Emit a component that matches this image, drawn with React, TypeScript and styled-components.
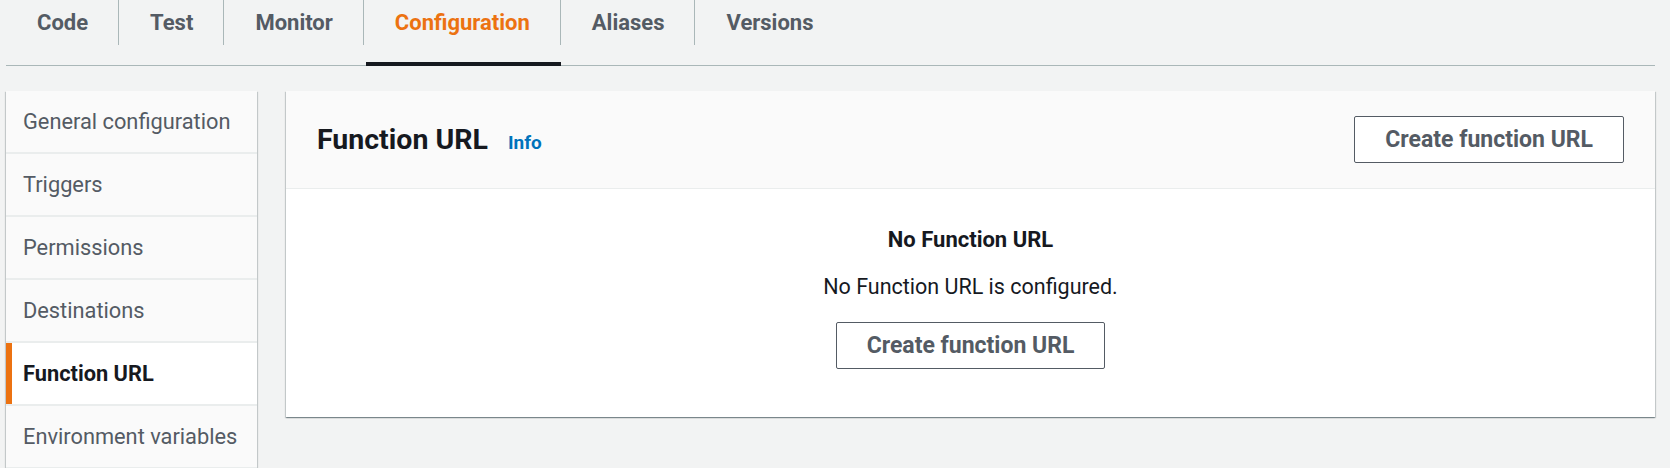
import React from "react";
import styled, { createGlobalStyle, css } from "styled-components";

const colors = {
    page: "#f2f3f3",
    panel: "#ffffff",
    tint: "#fafafa",
    divider: "#eaeded",
    tabRule: "#aab7b8",
    text: "#16191f",
    muted: "#545b64",
    orange: "#ec7211",
    link: "#0073bb",
};

const cardShadow = `0 1px 1px 0 rgba(0, 28, 36, 0.3), 1px 1px 1px 0 rgba(0, 28, 36, 0.15), -1px 1px 1px 0 rgba(0, 28, 36, 0.15)`;

const GlobalStyle = createGlobalStyle`
    html, body {
        margin: 0;
        padding: 0;
        background: ${colors.page};
        overflow: hidden;
    }
    body {
        font-family: Roboto, "Liberation Sans", Arial, sans-serif;
        color: ${colors.text};
    }
    * {
        box-sizing: border-box;
    }
`;

const Page = styled.div`
    height: 468px;
    padding: 0 15px 0 6px;
`;

const TabBar = styled.nav`
    display: flex;
    height: 66px;
    border-bottom: 1px solid ${colors.tabRule};
`;

const Tab = styled.div<{ $active?: boolean; $last?: boolean }>`
    position: relative;
    height: 66px;
    margin-bottom: -1px;
    padding: 0 31px;
    font-size: 22px;
    font-weight: 700;
    line-height: 45px;
    color: ${p => (p.$active ? colors.orange : colors.muted)};

    ${p => !p.$last && css`
        &::before {
            content: '';
            position: absolute;
            top: 0;
            right: 0;
            width: 1px;
            height: 45px;
            background: ${colors.tabRule};
        }
    `}

    ${p => p.$active && css`
        &::after {
            content: '';
            position: absolute;
            left: 2px;
            right: 0;
            bottom: 0;
            height: 4px;
            background: ${colors.text};
        }
    `}
`;

const Columns = styled.div`
    display: grid;
    grid-template-columns: 251px 1fr;
    column-gap: 29px;
    align-items: start;
    padding-top: 25px;
`;

const Sidebar = styled.ul`
    list-style: none;
    margin: 0;
    padding: 0;
    background: ${colors.tint};
    box-shadow: ${cardShadow};
`;

const SideItem = styled.li<{ $active?: boolean }>`
    display: flex;
    align-items: center;
    height: 63px;
    padding-left: 17px;
    border-bottom: 2px solid ${colors.divider};
    font-size: 21.8px;
    color: ${colors.muted};

    ${p => p.$active && css`
        background: ${colors.panel};
        color: ${colors.text};
        font-weight: 700;
        box-shadow: inset 6px 0 0 ${colors.orange};
    `}
`;

const Panel = styled.section`
    background: ${colors.panel};
    box-shadow: ${cardShadow};
`;

const PanelHeader = styled.header`
    display: flex;
    align-items: center;
    justify-content: space-between;
    height: 98px;
    padding: 0 31px;
    background: ${colors.tint};
    border-bottom: 1px solid ${colors.divider};
`;

const TitleRow = styled.div`
    display: flex;
    align-items: baseline;
    gap: 20px;
`;

const Title = styled.h2`
    margin: 0;
    font-size: 28.5px;
    font-weight: 700;
    color: ${colors.text};
`;

const InfoLink = styled.a`
    font-size: 19px;
    font-weight: 700;
    color: ${colors.link};
    text-decoration: none;
`;

const Button = styled.button`
    height: 47px;
    padding: 0 30px;
    background: ${colors.panel};
    border: 1px solid ${colors.muted};
    border-radius: 2px;
    font-family: inherit;
    font-size: 23px;
    font-weight: 700;
    color: ${colors.muted};
`;

const EmptyState = styled.div`
    display: flex;
    flex-direction: column;
    align-items: center;
    padding: 36px 0 48px;
    line-height: 30px;
    font-size: 21.5px;
`;

const EmptyTitle = styled.div`
    font-size: 22px;
    font-weight: 700;
    color: ${colors.text};
`;

const EmptyText = styled.div`
    margin: 17px 0 20px;
    color: ${colors.text};
`;

const tabs = ["Code", "Test", "Monitor", "Configuration", "Aliases", "Versions"];
const sections = [
    "General configuration",
    "Triggers",
    "Permissions",
    "Destinations",
    "Function URL",
    "Environment variables",
];

export default function App() {
    return <>
        <GlobalStyle />
        <Page>
            <TabBar>
                { tabs.map((t, i) => (
                    <Tab key={t} $active={t === "Configuration"} $last={i === tabs.length - 1}>{t}</Tab>
                )) }
            </TabBar>
            <Columns>
                <Sidebar>
                    { sections.map(s => (
                        <SideItem key={s} $active={s === "Function URL"}>{s}</SideItem>
                    )) }
                </Sidebar>
                <Panel>
                    <PanelHeader>
                        <TitleRow>
                            <Title>Function URL</Title>
                            <InfoLink href="#">Info</InfoLink>
                        </TitleRow>
                        <Button>Create function URL</Button>
                    </PanelHeader>
                    <EmptyState>
                        <EmptyTitle>No Function URL</EmptyTitle>
                        <EmptyText>No Function URL is configured.</EmptyText>
                        <Button>Create function URL</Button>
                    </EmptyState>
                </Panel>
            </Columns>
        </Page>
    </>
}
